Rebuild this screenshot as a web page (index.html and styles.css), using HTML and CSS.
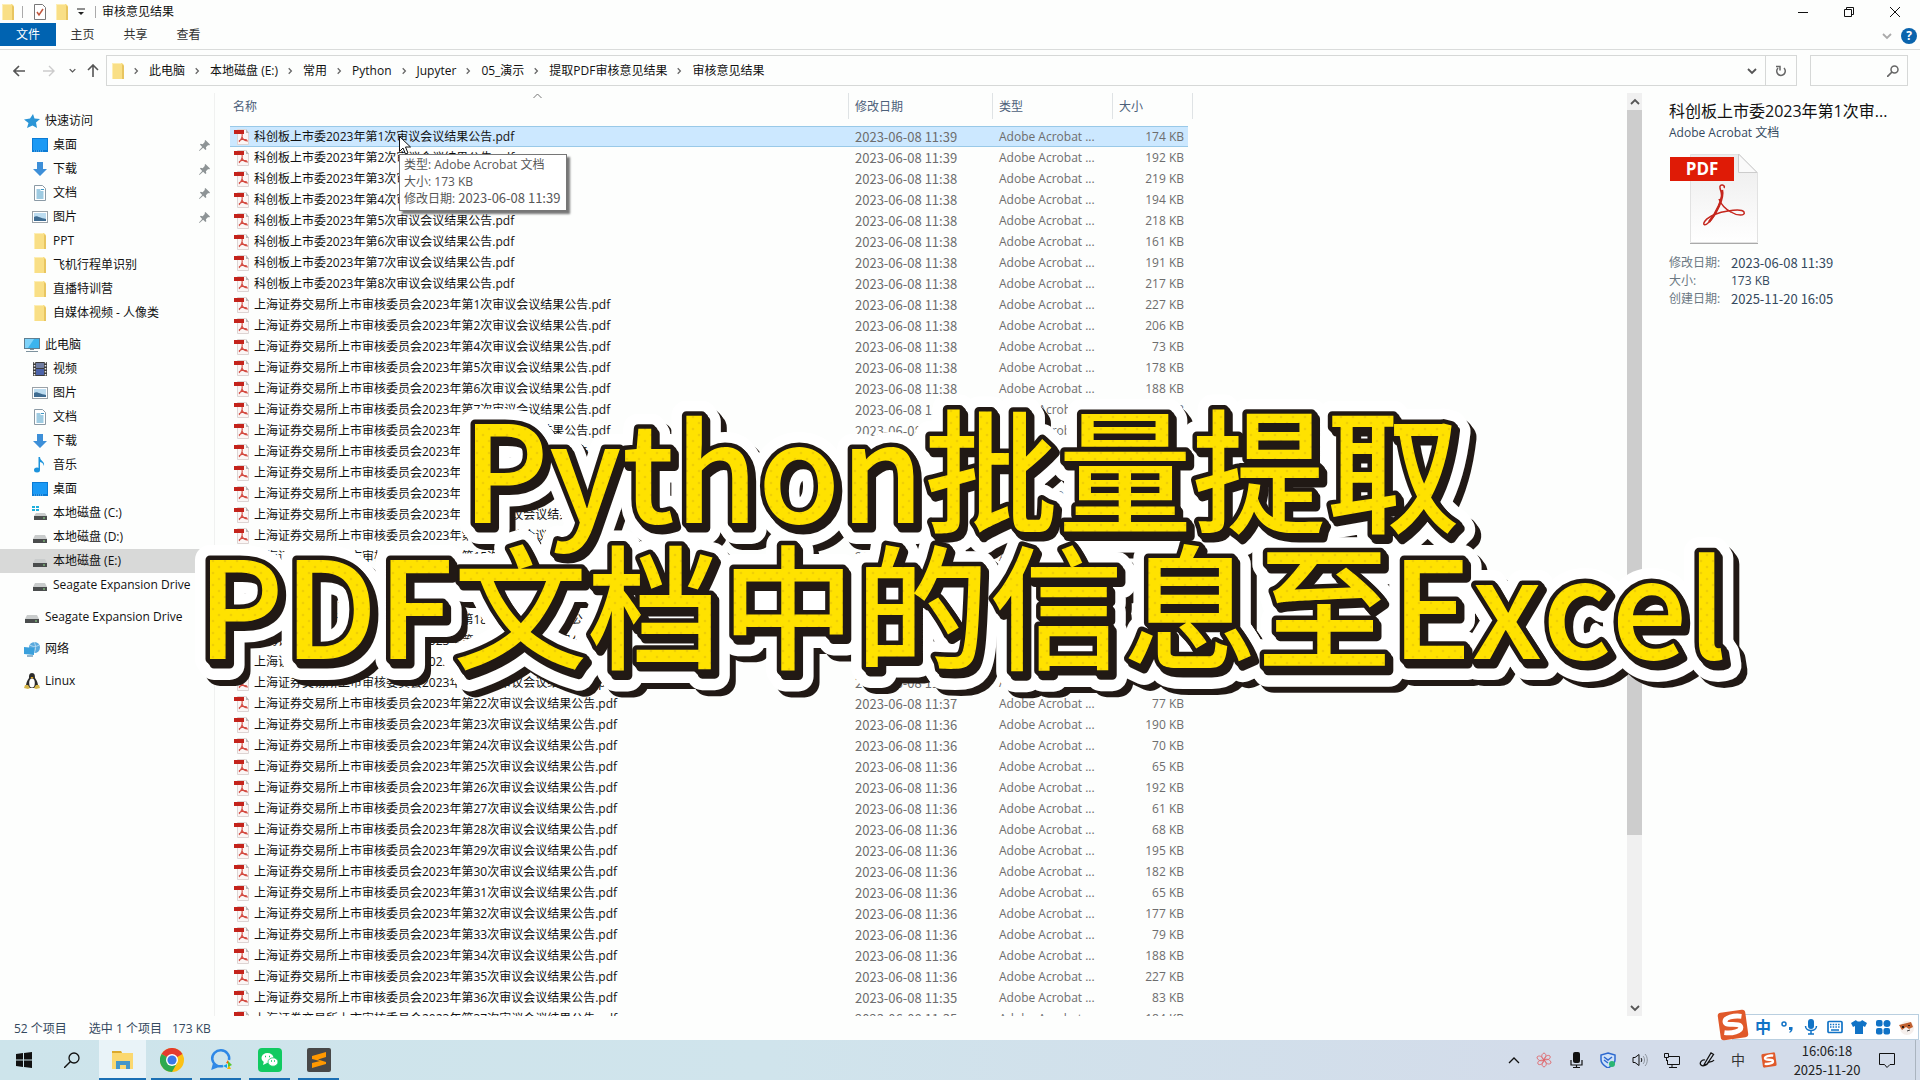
FILE: index.html
```
<!DOCTYPE html>
<html lang="zh-CN">
<head>
    <meta charset="utf-8">
    <title>审核意见结果</title>
    <link rel="stylesheet" href="styles.css">
</head>
<body>
    <!-- icons used more than once -->
    <svg class="sprite" aria-hidden="true">
        <symbol id="i-folder" viewBox="0 0 16 16"><path d="M2 0h10l2 2v14H2z" fill="#f9df86"/><path d="M12 1v15h2V3z" fill="#e8c560"/><path d="M2 0h9v1H3v15H2z" fill="#fdeeb4"/></symbol>
        <symbol id="i-pdf" viewBox="0 0 16 16"><path d="M3.500.5h8l3 3v12h-11z" fill="#fbf6f5" stroke="#ddd4d3"/><path d="M12 0l3 4h-3z" fill="#b9b9b9"/><path d="M0 1h10v4H0z" fill="#c4231b"/><path d="M8 5c1 3-.5 5-3 8M8 8c1 3 3 4 6 4M5 12c2-2 5-2 8-1" fill="none" stroke="#d3493f" stroke-width="1.100"/></symbol>
        <symbol id="i-desktop" viewBox="0 0 16 16"><rect y="1" width="16" height="14" fill="#0b7bd4"/><rect x="1" y="2" width="14" height="11" fill="#1b9af5"/><path d="M2 14h9" stroke="#7cc6fa" stroke-dasharray="1 1"/></symbol>
        <symbol id="i-down" viewBox="0 0 16 16"><path d="M5 1h6v7h4l-7 7-7-7h4z" fill="#3d8fd8"/></symbol>
        <symbol id="i-doc" viewBox="0 0 16 16"><path d="M2.500.5h8l3 3v12h-11z" fill="#fff" stroke="#8b9aa5"/><path d="M4.500 5h4M4.500 7h7M4.500 9h7M4.500 11h7M4.500 13h7M9 4.500h3" stroke="#3f97c4"/></symbol>
        <symbol id="i-pic" viewBox="0 0 16 16"><rect x=".5" y="2.500" width="15" height="11" fill="#fff" stroke="#9aa2a8"/><rect x="2" y="4" width="12" height="8" fill="#bcdcf0"/><path d="M2 8c3-2 5 1 12 2v2H2z" fill="#3f6c91"/></symbol>
        <symbol id="i-pc" viewBox="0 0 16 16"><rect x=".5" y="1.500" width="15" height="10" fill="#3bb4ee" stroke="#5f7f92"/><path d="M1 2h9l-6 9H1z" fill="#7fd3fa"/><path d="M6 12h4v1H6zM2 14h12v1H2z" fill="#7d929e"/></symbol>
        <symbol id="i-video" viewBox="0 0 16 16"><rect x="1" y="1" width="14" height="14" fill="#3c3c3c"/><path d="M2.500 1v14M13.500 1v14" stroke="#eee" stroke-width="1.500" stroke-dasharray="1.500 1.500"/><rect x="4" y="2" width="8" height="5" fill="#6f7ca0"/><rect x="4" y="8" width="8" height="6" fill="#4b62a8"/></symbol>
        <symbol id="i-music" viewBox="0 0 16 16"><ellipse cx="5" cy="13" rx="3" ry="2.500" fill="#1c93dc"/><path d="M6.500 0h1.500c0 4 5 4 4 9-1-3-2-3.500-4-4v8H6.500z" fill="#1c93dc"/></symbol>
        <symbol id="i-drive" viewBox="0 0 16 16"><path d="M3 6h10l2 4H1z" fill="#c9cccc"/><path d="M1 10h14v4H1z" fill="#4a4d4d"/><path d="M11 12h2" stroke="#8fe08a"/></symbol>
        <symbol id="i-cdrive" viewBox="0 0 16 16"><path d="M0 1h3v2H0zM4 1h3v2H4zM0 4h3v2H0zM4 4h3v2H4z" fill="#1fb0dd"/><path d="M4 8h9l2 3H2z" fill="#c9cccc"/><path d="M2 11h13v4H2z" fill="#4a4d4d"/><path d="M11 13h2" stroke="#8fe08a"/></symbol>
        <symbol id="i-star" viewBox="0 0 16 16"><path d="M9 1l1.500 4.500L16 6l-4 3.500 1 5.500-4.500-2.500L3 15l1.500-5L0 6.500l6-1z" fill="#2b95d6"/></symbol>
        <symbol id="i-net" viewBox="0 0 16 16"><circle cx="10.500" cy="6.500" r="5.500" fill="#5aa9dd"/><path d="M6 4c3 2 6 2 9 0M10 1c2 3 2 8 0 11" stroke="#b7dcf2" fill="none"/><path d="M0 6l10 1v7L0 13z" fill="#3aa0dc"/><path d="M3 15h6" stroke="#2a6f9d"/></symbol>
        <symbol id="i-linux" viewBox="0 0 16 16"><path d="M8 0c3 0 3 3 3 5 2 3 3 5 3 8l-3 2H5l-3-2c0-3 1-5 3-8 0-2 0-5 3-5z" fill="#2b2b2b"/><ellipse cx="8" cy="10" rx="2.800" ry="4.500" fill="#fff"/><path d="M6.500 4h3L8 6z" fill="#e8a81c"/><path d="M1 12l3 0 2 3-2 1-4-1zM15 12l-3 0-2 3 2 1 4-1z" fill="#d6b64a"/></symbol>
        <symbol id="i-pin" viewBox="0 0 12 12"><path d="M7 0l5 5-1 1-1-.5L7.500 8 8 10 7 11 4.500 8.500.5 12 0 11.500 3.500 7.500 1 5l1-1 2 .5L6.500 2 6 1z" fill="#8e9496"/></symbol>
        <symbol id="i-chev" viewBox="0 0 10 10"><path d="M3 2l3 3-3 3" fill="none" stroke="#666" stroke-width="1.400"/></symbol>
        <symbol id="i-vee" viewBox="0 0 10 10"><path d="M1 3l4 4 4-4" fill="none" stroke="currentColor" stroke-width="1.800"/></symbol>
        <symbol id="i-sogou" viewBox="0 0 30 30"><g transform="rotate(-8 15 15)"><rect x="2" y="2" width="26" height="26" rx="3" fill="#e0592a"/><path d="M24 8C17 6 8 7 8 11c0 5 14 2 14 7 0 4-9 5-16 3" fill="none" stroke="#fff" stroke-width="4.500"/></g></symbol>
    </svg>

    <header class="titlebar">
        <svg class="ic"><use href="#i-folder"/></svg>
        <span class="bar"></span>
        <button class="quick" aria-label="属性"><svg class="ic" viewBox="0 0 16 16"><path d="M2.500.5h8l3 3v12h-11z" fill="#fff" stroke="#777"/><path d="M5 8l2 3 4-6" fill="none" stroke="#c0563c" stroke-width="1.500"/></svg></button>
        <button class="quick" aria-label="新建文件夹"><svg class="ic"><use href="#i-folder"/></svg></button>
        <button class="quick small" aria-label="自定义快速访问工具栏"><svg width="8" height="8" viewBox="0 0 8 8"><path d="M0 1h8" stroke="#222"/><path d="M1 4h6L4 7z" fill="#222"/></svg></button>
        <span class="bar"></span>
        <h1>审核意见结果</h1>
        <div class="win">
            <button aria-label="最小化"><svg width="12" height="12" viewBox="0 0 12 12"><path d="M1 6.500h10" stroke="#111"/></svg></button>
            <button aria-label="还原"><svg width="12" height="12" viewBox="0 0 12 12"><path d="M1.500 3.500h7v7h-7zM3.500 3V1.500h7v7H9" fill="none" stroke="#111"/></svg></button>
            <button aria-label="关闭"><svg width="12" height="12" viewBox="0 0 12 12"><path d="M1 1l10 10M11 1L1 11" stroke="#111"/></svg></button>
        </div>
    </header>

    <nav class="tabs">
        <a href="#" class="file">文件</a>
        <a href="#">主页</a>
        <a href="#">共享</a>
        <a href="#">查看</a>
        <div class="help">
            <button class="gray" aria-label="展开功能区"><svg width="10" height="10"><use href="#i-vee"/></svg></button>
            <button class="q" aria-label="帮助">?</button>
        </div>
    </nav>

    <div class="address">
        <button class="arrow" aria-label="后退"><svg width="12" height="12" viewBox="0 0 12 12"><path d="M12 6H1M6 1L1 6l5 5" fill="none" stroke="#555" stroke-width="1.600"/></svg></button>
        <button class="arrow forward" aria-label="前进"><svg width="12" height="12" viewBox="0 0 12 12"><path d="M0 6h11M6 1l5 5-5 5" fill="none" stroke="#ccc" stroke-width="1.400"/></svg></button>
        <button class="arrow recent" aria-label="最近"><svg width="7" height="7"><use href="#i-vee"/></svg></button>
        <button class="arrow up" aria-label="向上"><svg width="12" height="13" viewBox="0 0 12 13"><path d="M6 13V1M1 6l5-5 5 5" fill="none" stroke="#555" stroke-width="1.600"/></svg></button>
        <div class="path">
            <svg class="ic"><use href="#i-folder"/></svg>
            <svg class="chev first"><use href="#i-chev"/></svg><a href="#">此电脑</a>
            <svg class="chev"><use href="#i-chev"/></svg><a href="#">本地磁盘 (E:)</a>
            <svg class="chev"><use href="#i-chev"/></svg><a href="#">常用</a>
            <svg class="chev"><use href="#i-chev"/></svg><a href="#">Python</a>
            <svg class="chev"><use href="#i-chev"/></svg><a href="#">Jupyter</a>
            <svg class="chev"><use href="#i-chev"/></svg><a href="#">05_演示</a>
            <svg class="chev"><use href="#i-chev"/></svg><a href="#">提取PDF审核意见结果</a>
            <svg class="chev"><use href="#i-chev"/></svg><a href="#">审核意见结果</a>
            <button class="older" aria-label="以前的位置"><svg width="10" height="10"><use href="#i-vee"/></svg></button>
            <button class="refresh" aria-label="刷新"><svg width="12" height="12" viewBox="0 0 12 12"><path d="M3 3a4.300 4.300 0 1 0 6 0M1 1.500h4v4" fill="none" stroke="#666" stroke-width="1.500"/></svg></button>
        </div>
        <label class="search"><input type="text" aria-label="搜索"><svg width="12" height="12" viewBox="0 0 12 12"><circle cx="7.500" cy="4.500" r="3.500" fill="none" stroke="#666" stroke-width="1.500"/><path d="M5 7L0 12" stroke="#666" stroke-width="1.700"/></svg></label>
    </div>

    <main>
        <nav class="tree">
            <a href="#"><svg class="ic"><use href="#i-star"/></svg>快速访问</a>
            <a href="#" class="sub"><svg class="ic"><use href="#i-desktop"/></svg>桌面<svg class="pin"><use href="#i-pin"/></svg></a>
            <a href="#" class="sub"><svg class="ic"><use href="#i-down"/></svg>下载<svg class="pin"><use href="#i-pin"/></svg></a>
            <a href="#" class="sub"><svg class="ic"><use href="#i-doc"/></svg>文档<svg class="pin"><use href="#i-pin"/></svg></a>
            <a href="#" class="sub"><svg class="ic"><use href="#i-pic"/></svg>图片<svg class="pin"><use href="#i-pin"/></svg></a>
            <a href="#" class="sub"><svg class="ic"><use href="#i-folder"/></svg>PPT</a>
            <a href="#" class="sub"><svg class="ic"><use href="#i-folder"/></svg>飞机行程单识别</a>
            <a href="#" class="sub"><svg class="ic"><use href="#i-folder"/></svg>直播特训营</a>
            <a href="#" class="sub"><svg class="ic"><use href="#i-folder"/></svg>自媒体视频 - 人像类</a>
            <a href="#" class="group"><svg class="ic"><use href="#i-pc"/></svg>此电脑</a>
            <a href="#" class="sub"><svg class="ic"><use href="#i-video"/></svg>视频</a>
            <a href="#" class="sub"><svg class="ic"><use href="#i-pic"/></svg>图片</a>
            <a href="#" class="sub"><svg class="ic"><use href="#i-doc"/></svg>文档</a>
            <a href="#" class="sub"><svg class="ic"><use href="#i-down"/></svg>下载</a>
            <a href="#" class="sub"><svg class="ic"><use href="#i-music"/></svg>音乐</a>
            <a href="#" class="sub"><svg class="ic"><use href="#i-desktop"/></svg>桌面</a>
            <a href="#" class="sub"><svg class="ic"><use href="#i-cdrive"/></svg>本地磁盘 (C:)</a>
            <a href="#" class="sub"><svg class="ic"><use href="#i-drive"/></svg>本地磁盘 (D:)</a>
            <a href="#" class="sub current"><svg class="ic"><use href="#i-drive"/></svg>本地磁盘 (E:)</a>
            <a href="#" class="sub"><svg class="ic"><use href="#i-drive"/></svg>Seagate Expansion Drive</a>
            <a href="#" class="group"><svg class="ic"><use href="#i-drive"/></svg>Seagate Expansion Drive</a>
            <a href="#" class="group"><svg class="ic"><use href="#i-net"/></svg>网络</a>
            <a href="#" class="group"><svg class="ic"><use href="#i-linux"/></svg>Linux</a>
        </nav>

        <section class="list">
            <table>
                <thead>
                    <tr><th class="name">名称<svg class="sort" width="9" height="6" viewBox="0 0 9 6"><path d="M.5 5l4-4 4 4" fill="none" stroke="#777"/></svg></th><th class="date">修改日期</th><th class="type">类型</th><th class="size">大小</th></tr>
                </thead>
                <tbody id="files"></tbody>
            </table>
            <div class="tooltip">类型: Adobe Acrobat 文档<br>大小: 173 KB<br>修改日期: <span class="num">2023-06-08 11:39</span></div>
            <svg class="cursor" width="12" height="19" viewBox="0 0 12 19"><path d="M.5.5v15l3.500-3.500 2.500 6 2.500-1-2.500-6h5z" fill="#fff" stroke="#111"/></svg>
        </section>

        <div class="scroll">
            <button aria-label="向上滚动"><svg class="flip" width="10" height="10"><use href="#i-vee"/></svg></button>
            <div class="thumb"></div>
            <div class="rest"></div>
            <button aria-label="向下滚动"><svg width="10" height="10"><use href="#i-vee"/></svg></button>
        </div>

        <aside class="details">
            <h2>科创板上市委2023年第1次审...</h2>
            <p>Adobe Acrobat 文档</p>
            <svg width="90" height="92" viewBox="0 0 90 92">
                <defs>
                    <linearGradient id="page" x2="0" y2="1"><stop offset="0" stop-color="#ececec"/><stop offset="1" stop-color="#fff"/></linearGradient>
                </defs>
                <path d="M21.500 1.500h49l18 18v70h-67z" fill="url(#page)" stroke="#e2e2e2"/>
                <path d="M21 90.500h68" stroke="#aaa"/>
                <path d="M69.500 1v18.500H88z" fill="#fafafa" stroke="#ccc"/>
                <rect x="1" y="4" width="64" height="24" fill="#df1b06"/>
                <text x="33" y="22" class="pdf-label">PDF</text>
                <path d="M55 35c2-3-5-5-4 0 1 5 3 6 1 12-3 10-9 20-13 23-3 3-6 2-3-2 4-5 14-9 23-10 6-1 14-2 16 1 2 4-7 4-13 0-6-3-10-8-12-13" fill="none" stroke="#c5261d" stroke-width="1.500"/>
                <path d="M53 37c2 8-6 24-13 32" fill="none" stroke="#c5261d" stroke-width="2.500"/>
            </svg>
            <dl>
                <dt>修改日期:</dt><dd class="num">2023-06-08 11:39</dd>
                <dt>大小:</dt><dd>173 KB</dd>
                <dt>创建日期:</dt><dd class="num">2025-11-20 16:05</dd>
            </dl>
        </aside>
    </main>

    <footer class="status"><span>52 个项目</span><span>选中 1 个项目</span><span>173 KB</span></footer>

    <div class="taskbar">
        <button aria-label="开始"><svg width="16" height="16" viewBox="0 0 16 16"><path d="M0 2l7-1v6.500H0zM8 1l8-1v7.500H8zM0 8.500h7V15l-7-1zM8 8.500h8V16l-8-1z" fill="#111"/></svg></button>
        <button aria-label="搜索"><svg width="16" height="16" viewBox="0 0 16 16"><circle cx="10" cy="6" r="5" fill="none" stroke="#111" stroke-width="1.300"/><path d="M6.500 9.500L0 16" stroke="#111" stroke-width="1.400"/></svg></button>
        <button class="app active" aria-label="文件资源管理器"><svg width="24" height="24" viewBox="0 0 24 24"><path d="M1 3h9l1 2h11v16H1z" fill="#fbd870"/><path d="M1 3h9l1 2H1z" fill="#dca92c"/><path d="M5 13h14v8h-4v-4H9v4H5z" fill="#4496c9"/></svg></button>
        <button class="app" aria-label="Chrome"><svg width="24" height="24" viewBox="0 0 24 24"><circle cx="12" cy="12" r="12" fill="#fbc116"/><path d="M12 12L1.600 6A12 12 0 0 1 22.400 6z" fill="#e33b2e"/><path d="M1.600 6A12 12 0 0 0 12 24l5-9-5-3z" fill="#2da94f"/><circle cx="12" cy="12" r="6" fill="#fff"/><circle cx="12" cy="12" r="4.600" fill="#3b78e7"/></svg></button>
        <button class="app" aria-label="企业微信"><svg width="24" height="24" viewBox="0 0 24 24"><path d="M20 12A8.500 8 0 1 0 14 18M5 16l-1 4 5-2" fill="none" stroke="#2f88e6" stroke-width="2.500"/><path d="M17 15l2-3 1 4z" fill="#fb6500"/><path d="M14 18l4-2 0 4z" fill="#0fa5e8"/><path d="M18 21l2-4 2 4z" fill="#f7b500"/><path d="M19 13l4 4-4 2z" fill="#5ac72f"/></svg></button>
        <button class="app" aria-label="微信"><svg width="24" height="24" viewBox="0 0 24 24"><rect width="24" height="24" rx="4" fill="#12ca61"/><ellipse cx="9.500" cy="10" rx="6" ry="5" fill="#fff"/><path d="M6 13l-1 4 4-2z" fill="#fff"/><ellipse cx="15" cy="14" rx="5" ry="4.200" fill="#fff" stroke="#12ca61" stroke-width=".8"/><path d="M7 8.500h1M11 8.500h1M13 13h1M16 13h1" stroke="#12ca61" stroke-width="1.500"/></svg></button>
        <button class="app" aria-label="Sublime Text"><svg width="24" height="24" viewBox="0 0 24 24"><rect width="24" height="24" rx="2" fill="#484848"/><path d="M5 8l14-4v5l-8 2.500 8 2.500v2L5 20v-5l8-2-8-2z" fill="#ff9800"/></svg></button>

        <div class="tray">
            <svg width="12" height="8" viewBox="0 0 12 8"><path d="M1 7l5-5 5 5" fill="none" stroke="#111" stroke-width="1.300"/></svg>
            <svg viewBox="0 0 16 16"><g fill="none" stroke="#e0666c" stroke-width=".9"><path d="M8 8c-3-2-3-6 0-7 3 1 2 4 0 7zM8 8c0-3 4-6 6-4 1 3-2 4-6 4zM8 8c3-2 7 0 7 3-2 2-5 1-7-3zM8 8c3 2 3 6 0 7-3-1-2-4 0-7zM8 8c0 3-4 6-6 4-1-3 2-4 6-4zM8 8c-3 2-7 0-7-3 2-2 5-1 7 3z"/></g></svg>
            <svg viewBox="0 0 16 16"><rect x="5" y="0" width="7" height="11" rx="2" fill="#111"/><path d="M3 8v5h11V8M8.500 13v2M5 15.500h7" fill="none" stroke="#111" stroke-width="1.200"/></svg>
            <svg viewBox="0 0 16 16"><path d="M8 1l7 2v5c0 4-4 6-7 8-3-2-7-4-7-8V3z" fill="#cfe1f8" stroke="#2e69cf" stroke-width="1.500"/><path d="M4 5l4 3 4-3M4 8l4 3" fill="none" stroke="#2e69cf" stroke-width="1.500"/><circle cx="12" cy="12" r="3" fill="#2bb673"/></svg>
            <svg viewBox="0 0 16 16"><path d="M1 5.500h2l4-3v11l-4-3H1z" fill="none" stroke="#111"/><path d="M9 6c1 1 1 3 0 4" fill="none" stroke="#111"/><path d="M11 4c2 2 2 6 0 8M13 2c3 3 3 9 0 12" fill="none" stroke="#8d949d"/></svg>
            <svg viewBox="0 0 16 16"><path d="M4 4.500h11.500v8H3.500V8M8 13v2M5 15.500h8M.5 1.500h4v4h-4zM2.500 6v3" fill="none" stroke="#111"/></svg>
            <svg class="pen" viewBox="0 0 16 16"><path d="M6 11L12 1l2.500 1.500L8 12l-3 1zM6 8c-3-1-6 3-4 5s6 0 7-2 4 0 6-3" fill="none" stroke="#111" stroke-width="1.300"/></svg>
            <span class="zh">中</span>
            <svg><use href="#i-sogou"/></svg>
        </div>
        <div class="clock num">16:06:18<br>2025-11-20</div>
        <button class="note" aria-label="通知"><svg width="16" height="16" viewBox="0 0 16 16"><path d="M.5 1.500h15v11H11L8 15.500 5.500 12.500h-5z" fill="none" stroke="#111"/></svg></button>
        <span class="peek"></span>
    </div>

    <!-- floating input method bar -->
    <div class="ime">
        <svg class="logo"><use href="#i-sogou"/></svg>
        <b>中</b>
        <svg viewBox="0 0 16 16"><circle cx="5" cy="5" r="2" fill="none" stroke="#1173c6" stroke-width="1.500"/><path d="M10 8h3.500c.5 3-.5 5-3 6v-1.500c1-.5 1-1 1-1.500H10z" fill="#1173c6"/></svg>
        <svg viewBox="0 0 16 16"><rect x="5" y="0" width="6" height="10" rx="3" fill="#1173c6"/><path d="M2.500 7c0 6 11 6 11 0M8 12v3M5 15h6" fill="none" stroke="#1173c6" stroke-width="1.500"/></svg>
        <svg viewBox="0 0 16 16"><rect x="1" y="2.500" width="14" height="11" rx="1" fill="none" stroke="#1173c6" stroke-width="1.700"/><path d="M3 5.500h10M3 8h10" stroke="#1173c6" stroke-width="1.500" stroke-dasharray="1.500 1.200"/><path d="M4 11h8" stroke="#1173c6" stroke-width="1.500"/></svg>
        <svg viewBox="0 0 16 16"><path d="M5 1c1 2 5 2 6 0l5 3-2 4-2-1v8H4V7L2 8 0 4z" fill="#1173c6"/></svg>
        <svg viewBox="0 0 16 16"><rect x="1" y="1" width="6.500" height="6.500" rx="2" fill="#1173c6"/><circle cx="12" cy="4.500" r="3.500" fill="#1173c6"/><rect x="1" y="9" width="6.500" height="6.500" rx="2" fill="#1173c6"/><rect x="8.500" y="9" width="6.500" height="6.500" rx="2" fill="#1173c6"/></svg>
        <svg viewBox="0 0 16 16"><circle cx="8" cy="9" r="7" fill="#f5efec"/><path d="M0 6l12-3 2 5-4 2-3-2-4 3z" fill="#c06030"/><path d="M3 7h2v2H3zM9 6h2v1H9z" fill="#2d1a12"/><path d="M8 12l3-1" stroke="#444"/></svg>
    </div>

    <!-- caption -->
    <svg class="caption" viewBox="0 0 1920 1080">
        <defs>
            <pattern id="dots" width="12" height="12" patternUnits="userSpaceOnUse">
                <rect width="12" height="12" fill="#ffe200"/>
                <circle cx="3" cy="3" r="1.300" fill="#efcf06"/>
                <circle cx="9" cy="9" r="1.300" fill="#efcf06"/>
            </pattern>
        </defs>
        <g class="drop"><use href="#words" x="7" y="8"/><use href="#words" x="10" y="12"/></g>
        <g class="halo"><use href="#words"/><use href="#words" x="2" y="3"/><use href="#words" x="4" y="6"/></g>
        <g class="edge"><use href="#words"/><use href="#words" x="2" y="2"/><use href="#words" x="4" y="5"/></g>
        <g class="face"><text id="words"><tspan x="462" y="523">Python批量提取</tspan><tspan x="197" y="659">PDF文档中的信息至Excel</tspan></text></g>
    </svg>

    <script src="script.js"></script>
</body>
</html>
```
FILE: styles.css
```
* {
    box-sizing: border-box;
}

body {
    margin: 0;
    height: 100vh;
    display: flex;
    flex-direction: column;
    overflow: hidden;
    background-color: #fdfefd;
    color: #111;
    font: 12px/16px "Open Sans", "Noto Sans CJK SC", sans-serif;
}

a {
    color: inherit;
    text-decoration: none;
}

button {
    display: flex;
    align-items: center;
    justify-content: center;
    padding: 0;
    border: 0;
    background: none;
    color: #555;
    font: inherit;
}

svg {
    display: block;
    flex: none;
}

.sprite {
    position: absolute;
    width: 0;
    height: 0;
}

.ic {
    width: 16px;
    height: 16px;
}

.num, td.date {
    font-family: "Noto Sans CJK SC", sans-serif;
    font-size: 13px;
}

/* title bar */
.titlebar {
    display: flex;
    align-items: center;
    height: 23px;
}

.titlebar .bar {
    width: 1px;
    height: 12px;
    margin: 0 6px;
    background-color: #aaa;
}

.titlebar .quick {
    width: 22px;
    height: 22px;
}

.titlebar .small {
    width: 16px;
}

.titlebar h1 {
    margin: 0;
    font-size: 12px;
    font-weight: normal;
}

.win {
    display: flex;
    margin: 0 2px 0 auto;
}

.win button {
    width: 46px;
    height: 21px;
}

/* ribbon tabs */
.tabs {
    display: flex;
    align-items: center;
    height: 27px;
    padding-bottom: 3px;
    border-bottom: 1px solid #dadcdb;
}

.tabs a {
    width: 53px;
    line-height: 23px;
    text-align: center;
    color: #333;
}

.tabs .file {
    width: 56px;
    background-color: #0063b1;
    color: #fff;
}

.help {
    display: flex;
    gap: 9px;
    margin-left: auto;
    padding: 3px 3px 0 0;
    align-items: center;
}

.gray {
    color: #aaa;
}

.q {
    width: 16px;
    height: 16px;
    border-radius: 8px;
    background-color: #0a64ad;
    color: #fff;
    font-weight: bold;
}

/* address bar */
.address {
    display: flex;
    padding: 5px 12px 7px;
    height: 43px;
}

.arrow {
    width: 14px;
    margin-right: 16px;
}

.forward {
    margin-right: 11px;
}

.recent {
    width: 10px;
    margin-right: 9px;
}

.up {
    margin-right: 5px;
}

.path {
    flex: 1;
    display: flex;
    align-items: center;
    margin-left: 1px;
    padding-left: 3px;
    border: 1px solid #d6d8d7;
}

.chev {
    width: 9px;
    height: 10px;
    margin: 0 8px;
}

.first {
    margin-left: 6px;
}

.older {
    margin-left: auto;
}

.refresh {
    width: 31px;
    height: 29px;
    margin-left: 8px;
    border-left: 1px solid #d6d8d7;
}

.search {
    display: flex;
    align-items: center;
    width: 98px;
    margin-left: 13px;
    padding-right: 8px;
    border: 1px solid #d6d8d7;
}

.search input {
    flex: 1;
    min-width: 0;
    border: 0;
    background: none;
}

/* body panes */
main {
    flex: 1;
    min-height: 0;
    display: flex;
}

.tree {
    width: 215px;
    padding-top: 16px;
    border-right: 1px solid #f0f1f0;
}

.tree a {
    display: flex;
    align-items: center;
    gap: 5px;
    height: 24px;
    padding: 0 4px 0 24px;
    white-space: nowrap;
}

.tree .sub {
    padding-left: 32px;
}

.tree .group {
    margin-top: 8px;
}

.tree .current {
    background-color: #d8d9d8;
}

.pin {
    width: 11px;
    height: 11px;
    margin-left: auto;
}

.list {
    flex: 1;
    position: relative;
    overflow: hidden;
    padding-left: 15px;
}

table {
    width: 963px;
    table-layout: fixed;
    border-collapse: separate;
    border-spacing: 0;
}

th {
    height: 26px;
    padding: 2px 6px 0;
    border-right: 1px solid #dfe3e5;
    text-align: left;
    font-weight: normal;
    color: #4c607a;
}

th.name {
    width: 619px;
    padding-left: 3px;
}

.sort {
    position: absolute;
    top: 0;
    left: 318px;
}

th.date {
    width: 144px;
}

th.type {
    width: 120px;
}

thead::after {
    content: "";
    display: block;
    height: 7px;
}

td {
    height: 21px;
    padding: 0 6px;
    line-height: 19px;
    color: #6d6d6d;
    white-space: nowrap;
}

td.name {
    color: #111;
    padding-left: 4px;
}

td.date {
    padding-bottom: 1px;
}

td a {
    display: flex;
    align-items: center;
    gap: 4px;
}

td.size {
    text-align: right;
    padding-right: 9px;
}

tr.selected td {
    background: linear-gradient(#99c9e8 1px, #cce8ff 1px, #cce8ff 20px, #99c9e8 20px) no-repeat;
}

tr.selected td.size {
    background-size: calc(100% - 5px) 100%;
}

.tooltip {
    position: absolute;
    left: 184px;
    top: 61px;
    padding: 1px 6px 3px 4px;
    border: 1px solid #767676;
    background-color: #fff;
    box-shadow: 3px 3px 2px #777;
    color: #575757;
    line-height: 17px;
    white-space: nowrap;
}

.tooltip .num {
    line-height: 13px;
}

.cursor {
    position: absolute;
    left: 184px;
    top: 43px;
}

.scroll {
    display: flex;
    flex-direction: column;
    width: 15px;
    background-color: #f0f0f0;
}

.scroll button {
    height: 17px;
}

.flip {
    transform: rotate(180deg);
}

.thumb {
    flex: 725;
    background-color: #cdcdcd;
}

.rest {
    flex: 164;
}

.details {
    width: 278px;
    padding: 6px 12px 0 27px;
    color: #34495e;
}

.details h2 {
    margin: 0;
    font-size: 16px;
    line-height: 24px;
    font-weight: normal;
    color: #111;
    white-space: nowrap;
}

.details p {
    margin: 2px 0 12px;
}

.pdf-label {
    fill: #fff;
    font: bold 17px "Open Sans", sans-serif;
    text-anchor: middle;
}

dl {
    display: grid;
    grid-template-columns: 62px 1fr;
    margin: 9px 0 0;
    line-height: 18px;
}

dt {
    color: #6b7883;
}

dd {
    margin: 0;
}

.status {
    display: flex;
    height: 24px;
    padding-left: 14px;
    line-height: 26px;
    color: #34495e;
}

.status span + span {
    margin-left: 22px;
}

.status span:last-child {
    margin-left: 10px;
}

/* taskbar */
.taskbar {
    display: flex;
    align-items: center;
    height: 40px;
    background: linear-gradient(to right, #cde4eb, #d0e4ec 40%, #d3dcea 80%);
}

.taskbar button {
    width: 48px;
    height: 40px;
}

.taskbar .app {
    width: 41px;
    margin: 0 4px;
    border-bottom: 2px solid #1b6fb4;
    padding-top: 2px;
}

.taskbar .active {
    width: 47px;
    margin: 0 1px 0 3px;
    background-color: #e9f3f8;
}

.tray {
    display: flex;
    align-items: center;
    gap: 16px;
    margin-left: auto;
}

.tray svg {
    width: 16px;
    height: 16px;
}

.tray svg:first-child {
    width: 12px;
    height: 8px;
}

.tray .pen {
    margin-left: 3px;
}

.zh {
    font-size: 14px;
    color: #333;
}

.clock {
    width: 100px;
    line-height: 19px;
    text-align: center;
    color: #222;
}

.taskbar .note {
    width: 20px;
}

.peek {
    width: 1px;
    height: 40px;
    margin: 0 4px 0 18px;
    background-color: #aab4bf;
}

.ime {
    position: absolute;
    right: 1px;
    bottom: 40px;
    display: flex;
    align-items: center;
    gap: 8px;
    height: 26px;
    padding-right: 3px;
    border: 1px solid #b9cfe0;
    background-color: #fff;
}

.ime svg {
    width: 16px;
    height: 16px;
}

.ime .logo {
    width: 32px;
    height: 32px;
    margin: -4px -2px 0 -16px;
}

.ime b {
    width: 16px;
    font-size: 16px;
    color: #1173c6;
}

/* caption */
.caption {
    position: absolute;
    inset: 0;
    width: 100%;
    height: 100%;
    pointer-events: none;
    font: 500 134px "Noto Sans CJK SC", sans-serif;
    font-kerning: none;
    stroke-linejoin: round;
}

.caption .drop {
    fill: #211915;
    stroke: #211915;
    stroke-width: 30px;
}

.caption .halo {
    fill: #fff;
    stroke: #fff;
    stroke-width: 30px;
}

.caption .edge {
    fill: #211915;
    stroke: #211915;
    stroke-width: 9px;
}

.caption .face {
    fill: url(#dots);
}
```
FILE: script.js
```
// [prefix, number, minute, size in KB]
var KC = '科创板上市委';
var SH = '上海证券交易所上市审核委员会';
var files = [
    [KC, 1, 39, 174], [KC, 2, 39, 192], [KC, 3, 38, 219], [KC, 4, 38, 194],
    [KC, 5, 38, 218], [KC, 6, 38, 161], [KC, 7, 38, 191], [KC, 8, 38, 217],
    [SH, 1, 38, 227], [SH, 2, 38, 206], [SH, 4, 38, 73], [SH, 5, 38, 178],
    [SH, 6, 38, 188], [SH, 7, 38, 190], [SH, 8, 38, 182], [SH, 9, 38, 75],
    [SH, 10, 37, 188], [SH, 11, 37, 71], [SH, 13, 37, 190], [SH, 14, 37, 68],
    [SH, 15, 37, 186], [SH, 16, 37, 72], [SH, 17, 37, 191], [SH, 18, 37, 66],
    [SH, 19, 37, 189], [SH, 20, 37, 74], [SH, 21, 37, 185], [SH, 22, 37, 77],
    [SH, 23, 36, 190], [SH, 24, 36, 70], [SH, 25, 36, 65], [SH, 26, 36, 192],
    [SH, 27, 36, 61], [SH, 28, 36, 68], [SH, 29, 36, 195], [SH, 30, 36, 182],
    [SH, 31, 36, 65], [SH, 32, 36, 177], [SH, 33, 36, 79], [SH, 34, 36, 188],
    [SH, 35, 36, 227], [SH, 36, 35, 83], [SH, 37, 35, 184]
];

var html = '';
for (var i = 0; i < files.length; i++) {
    var f = files[i];
    html += '<tr' + (i == 0 ? ' class="selected"' : '') + '>' +
        '<td class="name"><a href="#"><svg class="ic"><use href="#i-pdf"/></svg>' + f[0] + '2023年第' + f[1] + '次审议会议结果公告.pdf</a></td>' +
        '<td class="date">2023-06-08 11:' + f[2] + '</td>' +
        '<td class="type">Adobe Acrobat ...</td>' +
        '<td class="size">' + f[3] + ' KB</td></tr>';
}
document.getElementById('files').innerHTML = html;
```
